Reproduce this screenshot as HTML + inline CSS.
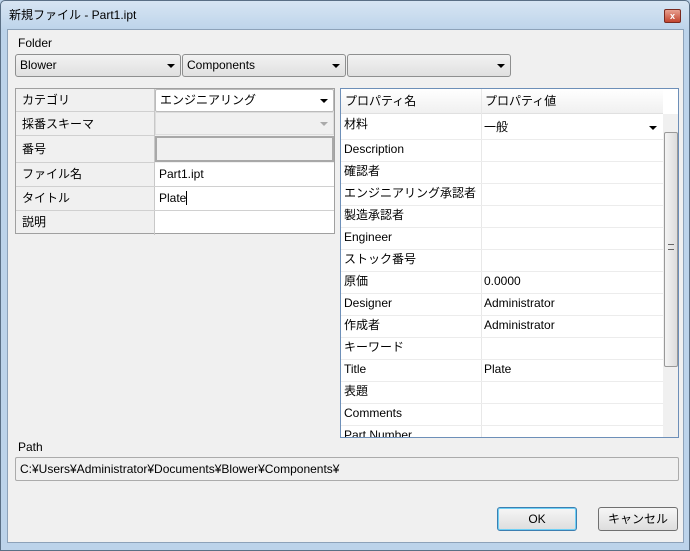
<html><head><style>
body{margin:0;width:690px;height:551px;background:#bcd3ea;font-family:"Liberation Sans","Noto Sans CJK JP",sans-serif;font-size:12px;line-height:15px;color:#000;position:relative;overflow:hidden}
.a{position:absolute;box-sizing:border-box}
.t{white-space:nowrap}
.combo{border:1px solid #8e8f8f;border-radius:3px;background:linear-gradient(#f2f2f2,#e0e0e0);padding:3px 4px;height:23px}
.arr{position:absolute;right:5px;top:9px;width:0;height:0;border-left:4px solid transparent;border-right:4px solid transparent;border-top:4px solid #000}
.row{position:absolute;left:0;width:322px;height:22px;border-bottom:1px solid #ececec}
.row span{position:absolute;top:3px;left:3px;white-space:nowrap}
.row b{font-weight:normal;position:absolute;top:3px;left:143px}
.btn{border:1px solid #707070;border-radius:3px;background:linear-gradient(#f6f6f6,#dddddd);text-align:center;padding-top:4px;height:24px}
</style></head><body>
<div class="a" style="left:0;top:0;width:690px;height:551px;border:1px solid #5a6f85;border-radius:5px 5px 0 0;background:linear-gradient(#d7e5f3,#bcd3ea 30px)"></div>
<div class="a t" style="left:9px;top:8px">新規ファイル - Part1.ipt</div>
<div class="a" style="left:664px;top:9px;width:17px;height:14px;background:linear-gradient(#e8a090,#c2452f);border:1px solid #7a2a20;border-radius:2px;color:#fff;font-size:9px;font-weight:bold;text-align:center;line-height:12px">x</div>
<div class="a" style="left:7px;top:29px;width:677px;height:514px;background:#f0f0f0;border:1px solid #8da2b9"></div>
<div class="a t" style="left:18px;top:36px">Folder</div>
<div class="a combo" style="left:15px;top:54px;width:166px">Blower<div class="arr"></div></div>
<div class="a combo" style="left:182px;top:54px;width:164px">Components<div class="arr"></div></div>
<div class="a combo" style="left:347px;top:54px;width:164px"><div class="arr"></div></div>
<div class="a" style="left:15px;top:88px;width:320px;height:146px;border:1px solid #a0a0a0;background:#f0f0f0">
 <div class="a" style="left:138px;top:0;width:1px;height:146px;background:#c8c8c8"></div>
 <div class="a t" style="left:6px;top:4px">カテゴリ</div>
 <div class="a t" style="left:6px;top:28px">採番スキーマ</div>
 <div class="a t" style="left:6px;top:53px">番号</div>
 <div class="a t" style="left:6px;top:78px">ファイル名</div>
 <div class="a t" style="left:6px;top:102px">タイトル</div>
 <div class="a t" style="left:6px;top:126px">説明</div>
 <div class="a" style="left:0;top:22px;width:138px;height:1px;background:#d0d0d0"></div>
 <div class="a" style="left:0;top:46px;width:138px;height:1px;background:#d0d0d0"></div>
 <div class="a" style="left:0;top:73px;width:138px;height:1px;background:#d0d0d0"></div>
 <div class="a" style="left:0;top:97px;width:318px;height:1px;background:#d0d0d0"></div>
 <div class="a" style="left:0;top:121px;width:318px;height:1px;background:#d0d0d0"></div>
 <div class="a" style="left:139px;top:0;width:179px;height:23px;background:#fff;border:1px solid #bbb;border-radius:2px;padding:3px 4px">エンジニアリング<div class="arr"></div></div>
 <div class="a" style="left:139px;top:23px;width:179px;height:23px;background:#f0f0f0;border:1px solid #ddd"><div class="arr" style="border-top-color:#aaa"></div></div>
 <div class="a" style="left:139px;top:47px;width:179px;height:26px;background:#f0f0f0;border:2px solid #a8a8a8"></div>
 <div class="a" style="left:139px;top:74px;width:179px;height:23px;background:#fff;padding:4px 4px">Part1.ipt</div>
 <div class="a" style="left:139px;top:98px;width:179px;height:23px;background:#fff;padding:4px 4px">Plate<span style="border-left:1px solid #000"></span></div>
 <div class="a" style="left:139px;top:122px;width:179px;height:22px;background:#fff"></div>
</div>
<div class="a" style="left:340px;top:88px;width:339px;height:350px;border:1px solid #6d8fb8;background:#fff;overflow:hidden">
 <div class="a" style="left:0;top:0;width:322px;height:25px;background:linear-gradient(#fff,#f0f0f0);border-bottom:1px solid #e0e0e0"></div>
 <div class="a" style="left:140px;top:0;width:1px;height:350px;background:#e8e8e8"></div>
 <div class="a t" style="left:4px;top:5px">プロパティ名</div>
 <div class="a t" style="left:144px;top:5px">プロパティ値</div>
 <div class="row" style="top:25px;height:25px"><span>材料</span><b style="top:6px">一般</b><div class="arr" style="right:6px;top:12px"></div></div>
 <div class="row" style="top:50px"><span>Description</span></div>
 <div class="row" style="top:72px"><span>確認者</span></div>
 <div class="row" style="top:94px"><span>エンジニアリング承認者</span></div>
 <div class="row" style="top:116px"><span>製造承認者</span></div>
 <div class="row" style="top:138px"><span>Engineer</span></div>
 <div class="row" style="top:160px"><span>ストック番号</span></div>
 <div class="row" style="top:182px"><span>原価</span><b>0.0000</b></div>
 <div class="row" style="top:204px"><span>Designer</span><b>Administrator</b></div>
 <div class="row" style="top:226px"><span>作成者</span><b>Administrator</b></div>
 <div class="row" style="top:248px"><span>キーワード</span></div>
 <div class="row" style="top:270px"><span>Title</span><b>Plate</b></div>
 <div class="row" style="top:292px"><span>表題</span></div>
 <div class="row" style="top:314px"><span>Comments</span></div>
 <div class="row" style="top:336px"><span>Part Number</span></div>
 <div class="a" style="left:322px;top:25px;width:16px;height:324px;background:#f0f0f0"></div>
 <div class="a" style="left:323px;top:43px;width:14px;height:235px;border:1px solid #999;border-radius:2px;background:linear-gradient(90deg,#f4f4f4,#dcdcdc)"></div>
 <div class="a" style="left:327px;top:155px;width:6px;height:6px;border-top:1px solid #666;border-bottom:1px solid #666"></div>
</div>
<div class="a t" style="left:18px;top:440px">Path</div>
<div class="a" style="left:15px;top:457px;width:664px;height:24px;border:1px solid #ababab;border-radius:2px;background:#f0f0f0;padding:4px 4px">C:¥Users¥Administrator¥Documents¥Blower¥Components¥</div>
<div class="a btn" style="left:497px;top:507px;width:80px;border-color:#3c7fb1;box-shadow:inset 0 0 0 1px #6fd0f5">OK</div>
<div class="a btn" style="left:598px;top:507px;width:80px">キャンセル</div>
</body></html>
